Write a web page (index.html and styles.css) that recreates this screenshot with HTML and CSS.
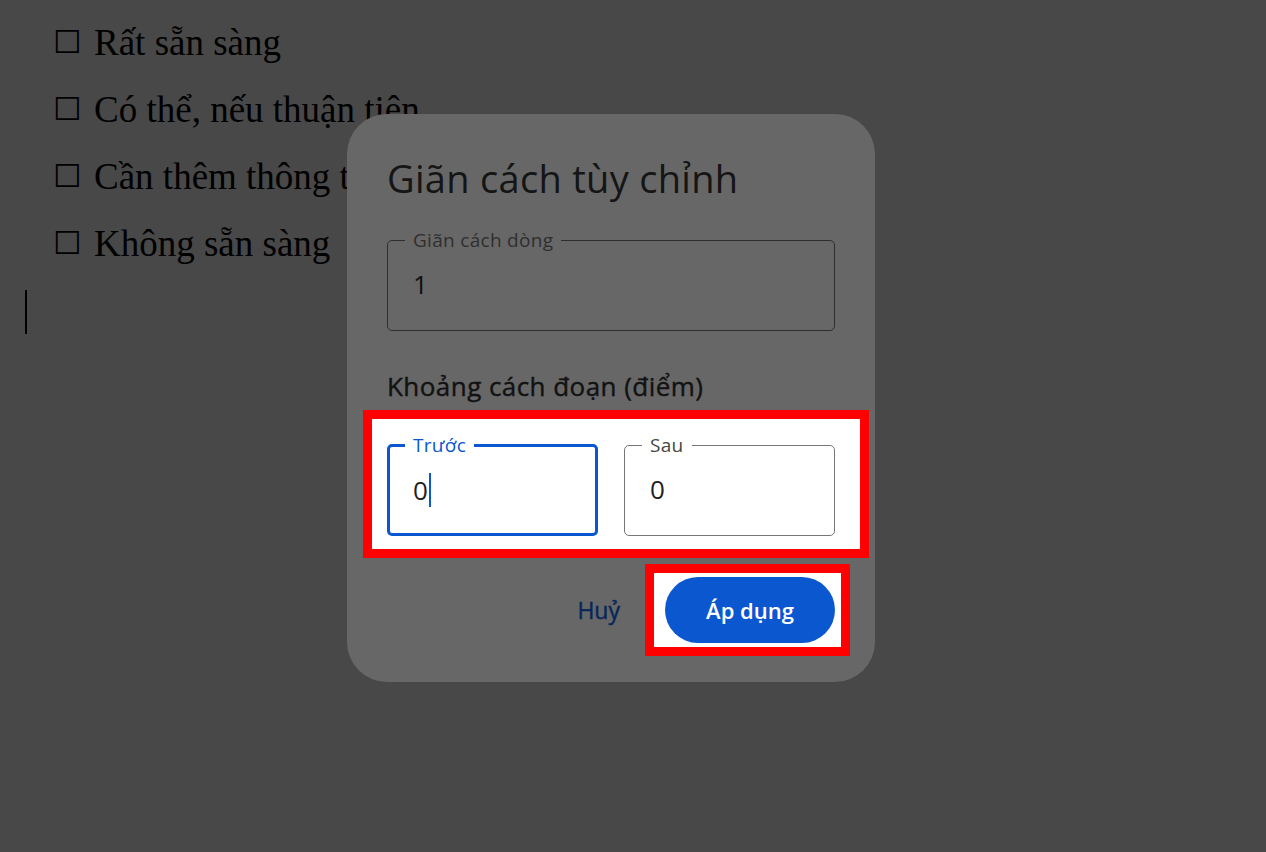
FILE: index.html
```html
<!DOCTYPE html>
<html lang="vi">
<head>
<meta charset="utf-8">
<title>Giãn cách tùy chỉnh</title>
<link rel="stylesheet" href="styles.css">
</head>
<body>
<div class="doc">
  <p class="item"><span class="box">☐</span>Rất sẵn sàng</p>
  <p class="item"><span class="box">☐</span>Có thể, nếu thuận tiện</p>
  <p class="item"><span class="box">☐</span>Cần thêm thông tin</p>
  <p class="item"><span class="box">☐</span>Không sẵn sàng</p>
  <p class="caret-line"><span class="doc-caret"></span></p>
</div>

<div class="dialog" role="dialog">
  <h1 class="title">Giãn cách tùy chỉnh</h1>
  <fieldset class="field">
    <legend class="label">Giãn cách dòng</legend>
    <div class="value">1</div>
  </fieldset>
  <h2 class="section">Khoảng cách đoạn (điểm)</h2>
  <div class="hl hl-fields">
    <fieldset class="field focused">
      <legend class="label">Trước</legend>
      <div class="value">0<span class="caret"></span></div>
    </fieldset>
    <fieldset class="field light">
      <legend class="label">Sau</legend>
      <div class="value">0</div>
    </fieldset>
  </div>
  <div class="actions">
    <button class="text-btn">Huỷ</button>
    <div class="hl hl-btn">
      <button class="primary">Áp dụng</button>
    </div>
  </div>
</div>
</body>
</html>
```

FILE: styles.css
```css
html, body {
  margin: 0;
  padding: 0;
}
body {
  background: #484848;
  width: 1266px;
  height: 852px;
  overflow: hidden;
  position: relative;
  font-family: "Open Sans", Roboto, sans-serif;
}

/* document */
.doc {
  padding: 9px 0 0 25px;
  font-family: "Liberation Serif", "Times New Roman", serif;
  font-size: 37px;
  color: #000;
}
.doc p {
  margin: 0;
  line-height: 67px;
  height: 67px;
  white-space: nowrap;
}
.item {
  padding-left: 28px;
}
.box {
  display: inline-block;
  width: 41px;
  font-family: "DejaVu Sans", sans-serif;
  font-size: 32px;
  vertical-align: 2px;
}
.caret-line {
  display: flex;
  align-items: center;
}
.doc-caret {
  display: block;
  width: 2px;
  height: 44px;
  background: #000;
  margin-top: 2px;
}

/* dialog */
.dialog {
  position: absolute;
  left: 347px;
  top: 114px;
  width: 528px;
  box-sizing: border-box;
  padding: 42px 40px 26px 40px;
  background: #676767;
  border-radius: 40px;
}
.title {
  margin: 0 0 30px 0;
  font-size: 38px;
  line-height: 44px;
  font-weight: 400;
  letter-spacing: 0.3px;
  color: #151515;
  white-space: nowrap;
}
.field {
  margin: 0;
  padding: 0 17px;
  border: 1px solid #2e2e2e;
  border-radius: 5px;
  min-width: 0;
}
.label {
  padding: 0 8px;
  font-size: 19px;
  line-height: 20px;
  letter-spacing: 0.3px;
  color: #2f2f2f;
}
.value {
  box-sizing: border-box;
  height: 80px;
  padding: 19px 0 0 8px;
  font-size: 26px;
  line-height: 30px;
  color: #0f0f0f;
}
.section {
  margin: 40px 0 9px 0;
  font-size: 26px;
  line-height: 30px;
  font-weight: 400;
  letter-spacing: 0.45px;
  -webkit-text-stroke: 0.4px #121212;
  color: #121212;
  white-space: nowrap;
}

/* highlight frames */
.hl {
  border: 9px solid #ff0000;
  background: #fff;
}
.hl-fields {
  margin: 0 -34px 0 -24px;
  padding: 16px 25px 13px 15px;
  display: grid;
  grid-template-columns: 211px 211px;
  column-gap: 26px;
}
.hl-fields .field {
  box-sizing: border-box;
}
.field.light {
  border-color: #747775;
}
.field.light .label {
  color: #444746;
}
.field.light .value,
.field.focused .value {
  color: #1f1f1f;
}
.field.focused {
  border: 3px solid #0b57d0;
  padding: 0 15px;
}
.field.focused .label {
  color: #0b57d0;
}
.field.focused .value {
  height: 77px;
  padding-top: 18px;
}
.caret {
  display: inline-block;
  width: 2px;
  height: 34px;
  background: #0b57d0;
  vertical-align: -7px;
  margin-left: 1px;
}

/* actions */
.actions {
  display: flex;
  justify-content: flex-end;
  align-items: center;
  gap: 25px;
  margin: 6px -15px 0 0;
}
.text-btn {
  border: 0;
  background: none;
  padding: 0;
  font-family: "Open Sans", Roboto, sans-serif;
  font-size: 23px;
  font-weight: 400;
  -webkit-text-stroke: 0.4px #062659;
  color: #062659;
}
.hl-btn {
  padding: 4px 6px 4px 11px;
}
.primary {
  display: block;
  width: 170px;
  height: 66px;
  border: 0;
  border-radius: 33px;
  background: #0b57d0;
  color: #fff;
  font-family: "Open Sans", Roboto, sans-serif;
  font-size: 22px;
  font-weight: 600;
}
```
